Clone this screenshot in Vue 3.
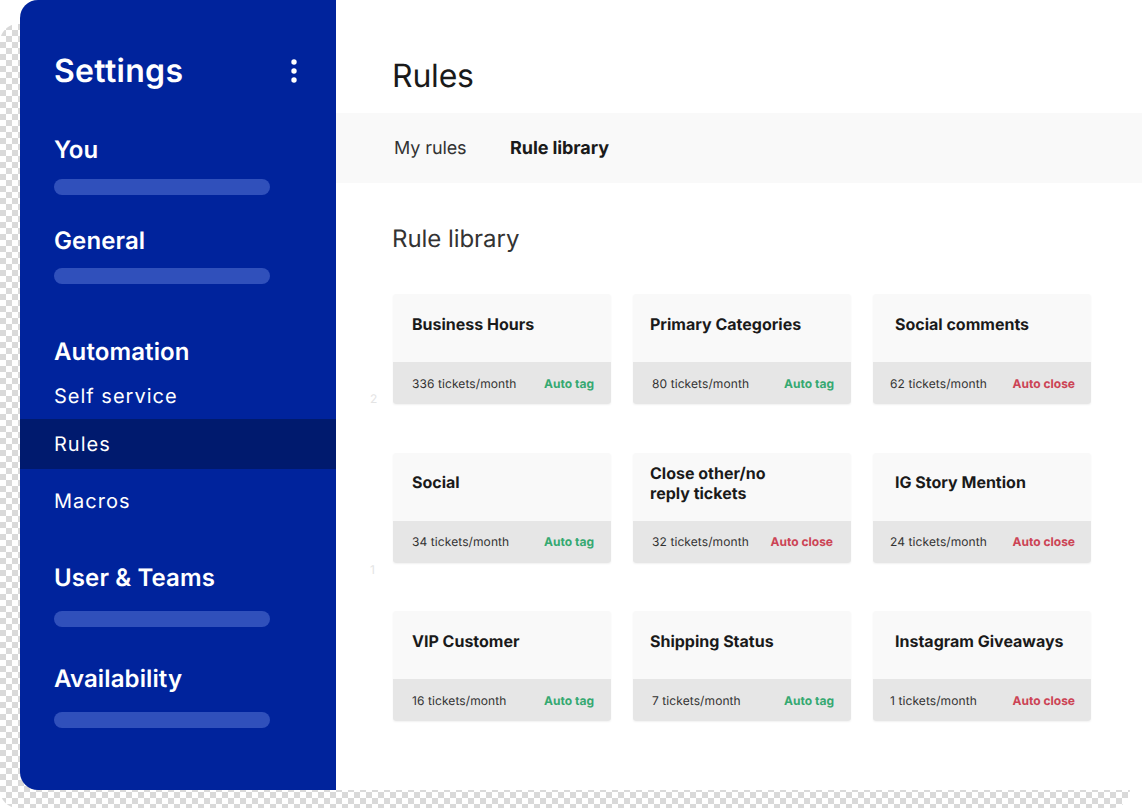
<script setup>
const sections = [
  { title: 'You', cls: 'you' },
  { title: 'General', cls: 'general' }
]
const links = [
  { label: 'Self service', cls: 'self' },
  { label: 'Rules', cls: 'active' },
  { label: 'Macros', cls: 'macros' }
]
const rows = [
  { cls: 'r1', mark: '2', cards: [
    { title: 'Business Hours', count: '336 tickets/month', tag: 'Auto tag' },
    { title: 'Primary Categories', count: '80 tickets/month', tag: 'Auto tag' },
    { title: 'Social comments', count: '62 tickets/month', tag: 'Auto close' }
  ] },
  { cls: 'r2', mark: '1', cards: [
    { title: 'Social', count: '34 tickets/month', tag: 'Auto tag' },
    { title: 'Close other/no reply tickets', count: '32 tickets/month', tag: 'Auto close', narrow: true },
    { title: 'IG Story Mention', count: '24 tickets/month', tag: 'Auto close' }
  ] },
  { cls: 'r3', mark: '', cards: [
    { title: 'VIP Customer', count: '16 tickets/month', tag: 'Auto tag' },
    { title: 'Shipping Status', count: '7 tickets/month', tag: 'Auto tag' },
    { title: 'Instagram Giveaways', count: '1 tickets/month', tag: 'Auto close' }
  ] }
]
</script>

<template>
  <div class="stage">
    <div class="checker"></div>
    <div class="window">
      <aside class="side">
        <div class="side-head">
          <h1>Settings</h1>
          <svg class="dots" width="6" height="24" viewBox="0 0 6 24" aria-hidden="true">
            <circle cx="3" cy="3" r="2.7" fill="#fff" />
            <circle cx="3" cy="12" r="2.7" fill="#fff" />
            <circle cx="3" cy="21" r="2.7" fill="#fff" />
          </svg>
        </div>
        <section v-for="s in sections" :key="s.title" :class="['group', s.cls]">
          <h2>{{ s.title }}</h2>
          <div class="pill"></div>
        </section>
        <section class="group auto">
          <h2>Automation</h2>
          <a v-for="l in links" :key="l.label" :class="['link', l.cls]">{{ l.label }}</a>
        </section>
        <section class="group teams">
          <h2>User &amp; Teams</h2>
          <div class="pill"></div>
        </section>
        <section class="group avail">
          <h2>Availability</h2>
          <div class="pill"></div>
        </section>
      </aside>
      <main class="main">
        <h1 class="page-title">Rules</h1>
        <nav class="tabs">
          <span class="tab">My rules</span>
          <span class="tab on">Rule library</span>
        </nav>
        <h2 class="lib-title">Rule library</h2>
        <div class="rows">
          <div v-for="row in rows" :key="row.cls" :class="['row', row.cls]">
            <span v-if="row.mark" class="mark">{{ row.mark }}</span>
            <article v-for="c in row.cards" :key="c.title" class="card">
              <div class="card-top"><h3 :class="{ narrow: c.narrow }">{{ c.title }}</h3></div>
              <div class="card-foot">
                <span class="count">{{ c.count }}</span>
                <span :class="['tag', c.tag === 'Auto tag' ? 'green' : 'red']">{{ c.tag }}</span>
              </div>
            </article>
          </div>
        </div>
      </main>
    </div>
  </div>
</template>

<style scoped>
* { box-sizing: border-box; }
h1, h2, h3 { margin: 0; font-weight: 500; }
.stage {
  position: relative;
  width: 1142px;
  height: 810px;
  overflow: hidden;
  background: #fff;
  font-family: Inter, "Liberation Sans", sans-serif;
  text-rendering: geometricPrecision;
}
.checker {
  position: absolute;
  left: 0;
  top: 24px;
  width: 1130px;
  height: 784px;
  border-radius: 18px;
  background-color: #fff;
  background-image: conic-gradient(#d9d9d9 25%, #fff 0 50%, #d9d9d9 0 75%, #fff 0);
  background-size: 12px 12px;
}
.window {
  position: relative;
  display: flex;
  margin-left: 20px;
  width: 1122px;
  height: 790px;
}
.side {
  width: 316px;
  height: 100%;
  background: #00239c;
  border-radius: 18px 0 0 18px;
  color: #fff;
  padding-top: 51px;
}
.side-head {
  display: flex;
  justify-content: space-between;
  align-items: center;
  padding: 0 39px 0 34px;
  height: 40px;
}
.side-head h1 { font-size: 32px; line-height: 40px; font-weight: 600; letter-spacing: .3px; }
.group h2 {
  font-size: 24px;
  line-height: 30px;
  padding-left: 34px;
  font-weight: 600;
  letter-spacing: .12px;
}
.pill {
  width: 216px;
  height: 16px;
  margin-left: 34px;
  border-radius: 8px;
  background: #3050bb;
}
.you { margin-top: 44px; }
.you .pill { margin-top: 14px; }
.general { margin-top: 31px; }
.general .pill { margin-top: 12px; }
.auto { margin-top: 53px; }
.link {
  display: flex;
  align-items: center;
  padding-left: 34px;
  font-size: 20px;
  letter-spacing: 1px;
}
.self { height: 38px; margin-top: 10px; }
.active { height: 50px; background: #001a6e; margin-top: 4px; }
.macros { height: 50px; margin-top: 7px; }
.teams { margin-top: 37px; }
.teams .pill { margin-top: 18px; }
.avail { margin-top: 37px; }
.avail .pill { margin-top: 18px; }
.main {
  flex: 1;
  background: #fff;
  color: #1a1a1a;
}
.page-title {
  font-size: 32px;
  font-weight: 400;
  line-height: 40px;
  padding: 56px 0 0 56px;
  height: 113px;
  letter-spacing: -.2px;
}
.tabs {
  display: flex;
  align-items: center;
  gap: 43.6px;
  height: 70px;
  padding: 0 0 0 58px;
  background: #f9f9f9;
}
.tab { font-size: 18px; color: #333; letter-spacing: -.1px; }
.tab.on { font-weight: 700; color: #1a1a1a; }
.lib-title {
  font-size: 24px;
  font-weight: 400;
  line-height: 30px;
  margin: 41px 0 0 56px;
  color: #333;
  letter-spacing: -.05px;
}
.rows {
  display: flex;
  flex-direction: column;
  gap: 48.5px;
  margin: 40px 0 0 57px;
}
.row {
  position: relative;
  display: grid;
  grid-template-columns: repeat(3, 218px);
  gap: 22px;
}
.mark {
  position: absolute;
  left: -23px;
  font-size: 12px;
  color: #e4e4e4;
}
.r1 .mark { top: 97px; }
.r2 .mark { top: 109px; }
.card {
  height: 110px;
  border-radius: 3px;
  overflow: hidden;
  box-shadow: 0 1px 2px rgba(0, 0, 0, .06);
}
.card-top {
  height: 68px;
  background: #f9f9f9;
  display: flex;
  align-items: center;
  padding: 0 10px 8px 19px;
}
.r2 .card-top { padding-bottom: 9px; }
.r2 .card:nth-of-type(2) .card-top { padding-bottom: 8px; }
.card-top h3 {
  font-size: 16px;
  line-height: 20px;
  font-weight: 700;
  color: #1a1a1a;
}
.card-top h3.narrow { max-width: 150px; }
.card:nth-of-type(2) .card-top { padding-left: 17px; }
.card:nth-of-type(3) .card-top { padding-left: 22px; }
.card-foot {
  height: 42px;
  background: #e6e6e6;
  display: flex;
  justify-content: space-between;
  align-items: center;
  padding: 0 17px 0 19px;
}
.card:nth-of-type(3) .card-foot { padding-left: 17px; padding-right: 16px; }
.r2 .card:nth-of-type(2) .card-foot { padding-right: 18px; }
.count { font-size: 12px; color: #333; letter-spacing: .09px; }
.tag { font-size: 12px; font-weight: 700; }
.green { color: #35a971; }
.red { color: #cc4455; }
</style>
